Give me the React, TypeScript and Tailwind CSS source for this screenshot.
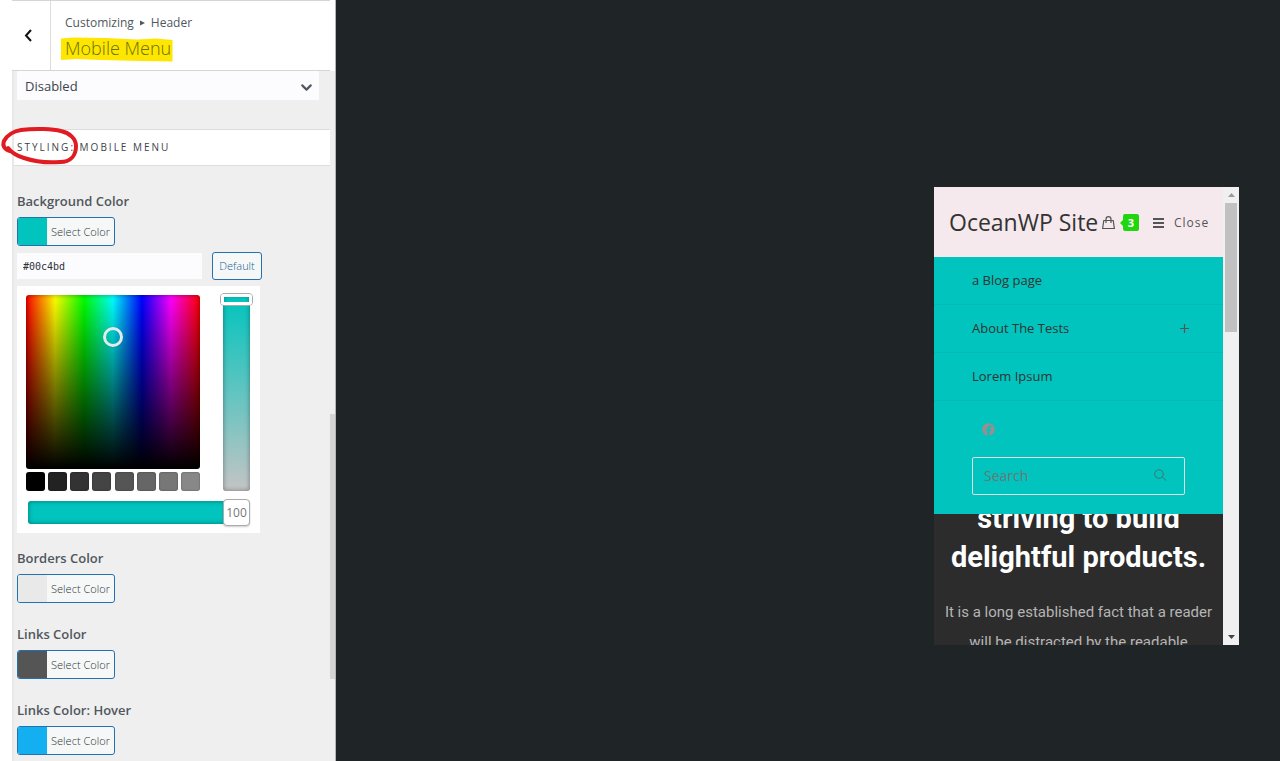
import { useState } from "react";
import { ChevronDown } from "lucide-react";
import { FaFacebook } from "react-icons/fa";

const swatches = ["#000000", "#222222", "#333333", "#444444", "#555555", "#666666", "#777777", "#888888"];

const colorControls = [
  { id: "borders", label: "Borders Color", color: "#e9e9e9" },
  { id: "links", label: "Links Color", color: "#555555" },
  { id: "links-hover", label: "Links Color: Hover", color: "#13aff0" },
];

const menuItems = [
  { label: "a Blog page", hasChildren: false },
  { label: "About The Tests", hasChildren: true },
  { label: "Lorem Ipsum", hasChildren: false },
];

function ColorButton({ id, label, color }: { id: string; label: string; color: string }) {
  return (
    <div className="flex flex-col items-start gap-1.5">
      <span id={id} className="h-5 text-[13px] leading-5 font-semibold text-[#50575e]">
        {label}
      </span>
      <button
        type="button"
        aria-describedby={id}
        className="flex h-[29px] w-[98px] overflow-hidden rounded-[3px] border border-[#2271b1] bg-[#f6f7f7] text-[11px] font-light text-[#2c3338]"
      >
        <span className="h-full w-[29px] shrink-0" style={{ backgroundColor: color }} />
        <span className="flex-1 text-center leading-[27px] whitespace-nowrap">Select Color</span>
      </button>
    </div>
  );
}

function ColorPicker() {
  return (
    <div className="w-[243px] bg-white p-[9px]">
      <div className="flex justify-between pr-px">
        <div className="w-[174px]">
          {/* Hue / lightness square */}
          <div className="relative h-[174px] rounded-[3px] bg-[linear-gradient(to_bottom,transparent,#000),linear-gradient(to_right,#f00,#ff0,#0f0,#0ff,#00f,#f0f,#f00)] shadow-[inset_0_0_5px_rgba(0,0,0,0.4)]">
            <span className="absolute top-8 left-[77px] h-5 w-5 rounded-full border-3 border-[#dcecef] shadow-[0_0_1px_#666]" />
          </div>
          <div className="mt-[3px] flex justify-between">
            {swatches.map((color) => (
              <button
                key={color}
                type="button"
                aria-label={color}
                className="h-[19px] w-[19px] rounded-[3px] shadow-[inset_0_0_2px_rgba(0,0,0,0.4)]"
                style={{ backgroundColor: color }}
              />
            ))}
          </div>
        </div>
        {/* Saturation strip */}
        <div className="relative h-[196px] w-[27px] rounded-[3px] bg-[linear-gradient(to_bottom,#00c4bd,#c4c4c4)] shadow-[inset_0_0_5px_rgba(0,0,0,0.4)]">
          <span className="absolute top-[-2px] left-[-3px] h-[13px] w-[33px] rounded-[4px] border border-[#aaa]">
            <span className="block h-full rounded-[3px] border-3 border-white" />
          </span>
          <input
            type="range"
            aria-label="Saturation"
            defaultValue={100}
            className="absolute inset-0 h-full w-full opacity-0 [writing-mode:vertical-lr] [direction:rtl]"
          />
        </div>
      </div>
      {/* Opacity */}
      <div className="relative mt-2.5 mr-px ml-0.5 h-[23px] rounded-[3px] bg-[#00c4bd] shadow-[inset_0_0_5px_rgba(0,0,0,0.4)]">
        <span className="absolute top-[-2px] right-0 h-[27px] w-[27px] rounded-[4px] border border-[#aaa] bg-white text-center text-xs leading-[25px] text-[#777] shadow-[0_1px_2px_rgba(0,0,0,0.2)]">
          100
        </span>
        <input
          type="range"
          aria-label="Opacity"
          defaultValue={100}
          className="absolute inset-0 h-full w-full opacity-0"
        />
      </div>
    </div>
  );
}

function Customizer() {
  const [hex, setHex] = useState("#00c4bd");

  return (
    <aside className="relative flex w-[336px] shrink-0 flex-col overflow-hidden border-r border-[#b5b5b5] bg-white pl-3 font-['Open_Sans','Noto_Sans',sans-serif]">
      <header className="mr-[5px] flex h-[71px] shrink-0 border-t border-b border-[#d5d5d5]">
        <button
          type="button"
          aria-label="Back"
          className="flex w-[39px] shrink-0 items-center border-r border-[#ddd] pl-3"
        >
          <svg width="8" height="13" viewBox="0 0 8 13" fill="none" stroke="#111" strokeWidth="2">
            <path d="M7 1 2 6.5 7 12" />
          </svg>
        </button>
        <div className="pt-3 pl-3.5">
          <p className="flex items-center text-xs leading-5 text-[#50575e]">
            Customizing
            <svg className="mx-1.5" width="5" height="6" viewBox="0 0 5 6" fill="#50575e">
              <path d="M0 0.5 5 3 0 5.5z" />
            </svg>
            Header
          </p>
          <div className="relative">
            {/* Marker stroke */}
            <svg
              className="absolute top-1 -left-1"
              width="112"
              height="26"
              viewBox="0 0 112 26"
              fill="#ffe600"
            >
              <path d="M0 1.5 12 0.5 45 1 76 2.5 95 1.5 111.5 3V24.5L80 24 40 23 15 22 0 23z" />
            </svg>
            <h1 className="relative text-lg leading-[30px] font-light whitespace-nowrap text-[#667300]">
              Mobile Menu
            </h1>
          </div>
        </div>
      </header>

      <div className="flex-1 border-l-2 border-[#e8e8e8] bg-[#efefef]">
        <div className="relative mr-4 ml-[3px]">
          <select
            aria-label="Custom menu"
            className="block h-[29px] w-full appearance-none bg-[#fcfcff] px-2 pt-0.5 text-[13px] text-[#3c434a]"
          >
            <option>Disabled</option>
          </select>
          <ChevronDown
            className="pointer-events-none absolute top-2 right-1 text-[#50575e]"
            size={17}
            strokeWidth={3}
          />
        </div>

        <div className="relative mt-[29px] mr-[5px] border-y border-[#ddd] bg-white pl-[3px]">
          <h2 className="text-[10px] leading-[35px] tracking-[2px] text-[#3c434a] uppercase">
            Styling: Mobile Menu
          </h2>
          {/* Hand-drawn ring */}
          <svg
            className="absolute -top-1 -left-3.5"
            width="80"
            height="40"
            viewBox="0 0 80 40"
            fill="none"
            stroke="#e11b22"
            strokeWidth="4"
            strokeLinecap="round"
            strokeLinejoin="round"
          >
            <path d="M10 25C5 24 2 20 4 15 7 9 14 5 21 4 36 2 53 3 61 5 70 7 76 13 76 20 76 29 71 36 60 36 47 37 33 35 24 32 17 30 12 27 8 22" />
          </svg>
        </div>

        <div className="mt-[25px] flex flex-col gap-1.5 pl-[3px]">
          <ColorButton id="background" label="Background Color" color="#00c4bd" />
          <div className="flex h-7 items-center gap-2.5">
            <input
              type="text"
              aria-label="Background color value"
              value={hex}
              onChange={(e) => setHex(e.target.value)}
              className="h-[26px] w-[185px] bg-[#fcfcff] px-1.5 font-['DejaVu_Sans_Mono',monospace] text-[10px] text-[#2c3338]"
            />
            <button
              type="button"
              onClick={() => setHex("#00c4bd")}
              className="h-7 w-[50px] rounded-[3px] border border-[#2271b1] bg-[#f6f7f7] text-[11px] font-light text-[#135e96]"
            >
              Default
            </button>
          </div>
          <ColorPicker />
        </div>

        <div className="mt-[15px] flex flex-col gap-[21px] pl-[3px]">
          {colorControls.map((control) => (
            <ColorButton key={control.id} {...control} />
          ))}
        </div>
      </div>

      {/* Scrollbar thumb */}
      <span className="absolute top-[414px] right-0 h-[265px] w-[5px] bg-[#d5d5d5]" />
    </aside>
  );
}

function MobilePreview() {
  return (
    <div className="flex h-[458px] w-[305px] bg-[#2c2c2c]">
      <div className="flex min-w-0 flex-1 flex-col overflow-hidden font-['Open_Sans',sans-serif]">
        <header className="flex h-[70px] shrink-0 items-center bg-[#f5e9ed] pt-px pl-[15px]">
          <a href="#" className="w-[153px] shrink-0 text-[23px] whitespace-nowrap text-[#333]">
            OceanWP Site
          </a>
          <a href="#" aria-label="Cart, 3 items" className="flex shrink-0 items-center">
            <svg width="13" height="14" viewBox="0 0 13 14" fill="none" stroke="#555" strokeWidth="1.2">
              <path d="M1.8 4.5h9.4l1.2 8H0.6z" />
              <path d="M4 7V3.2a2.5 2.5 0 0 1 5 0V7" />
            </svg>
            <svg className="ml-[5px]" width="3" height="6" viewBox="0 0 3 6" fill="#21d60f">
              <path d="M3 0v6L0 3z" />
            </svg>
            <span className="h-[17px] w-4 rounded-[2px] bg-[#21d60f] text-center text-[11px] leading-[17px] font-bold text-white">
              3
            </span>
          </a>
          <button type="button" className="ml-3.5 flex items-center gap-2.5 text-xs text-[#555]">
            <svg width="11" height="10" viewBox="0 0 11 10" fill="#555" shapeRendering="crispEdges">
              <path d="M0 0h11v2H0zM0 4h11v2H0zM0 8h11v2H0z" />
            </svg>
            <span className="tracking-[1px]">Close</span>
          </button>
        </header>

        <div className="shrink-0 bg-[#00c4bd] pb-[19px]">
          <nav>
            {menuItems.map((item) => (
              <a
                key={item.label}
                href="#"
                className="flex h-12 items-center justify-between border-b border-[#04bab4] pr-[33px] pl-[38px] text-[13px] text-[#333]"
              >
                {item.label}
                {item.hasChildren && (
                  <svg width="10" height="9" viewBox="0 0 10 9" stroke="#555" strokeWidth="1.2">
                    <path d="M4.5 0v9M0 4.5h9" />
                  </svg>
                )}
              </a>
            ))}
          </nav>
          <a href="#" aria-label="Facebook" className="mt-[22px] ml-12 block w-[13px]">
            <FaFacebook size={13} color="#978f92" />
          </a>
          <form className="relative mx-[38px] mt-[21px]">
            <input
              type="search"
              aria-label="Search"
              placeholder="Search"
              className="block h-[38px] w-full rounded-[2px] border border-[#dde5e5] bg-transparent px-[11px] pb-0.5 text-sm text-[#333] placeholder:text-[#6b7777]"
            />
            <button type="button" aria-label="Submit search" className="absolute top-3 right-[18px]">
              <svg width="13" height="12" viewBox="0 0 13 12" fill="none" stroke="#3f7775" strokeWidth="1">
                <circle cx="5" cy="5" r="4.3" />
                <path d="M8.2 8 12.2 11.5" />
              </svg>
            </button>
          </form>
        </div>

        <div className="min-h-0 flex-1 overflow-hidden text-center font-['Roboto',sans-serif]">
          <h2 className="-mt-[15px] text-[29px] leading-[39px] font-bold text-white">
            striving to build
            <br />
            delightful products.
          </h2>
          <p className="mt-5 text-[15px] leading-[30px] whitespace-nowrap text-[#b5b5b5]">
            It is a long established fact that a reader
            <br />
            will be distracted by the readable
          </p>
        </div>
      </div>

      {/* Scrollbar */}
      <div className="flex w-4 shrink-0 flex-col items-center bg-[#f0f0f0]">
        <svg className="mt-1.5 mb-1.5" width="7" height="4" viewBox="0 0 7 4" fill="#999">
          <path d="M3.5 0 7 4H0z" />
        </svg>
        <span className="h-[129px] w-3 bg-[#c1c1c1]" />
        <svg className="mt-auto mb-1.5" width="7" height="4" viewBox="0 0 7 4" fill="#444">
          <path d="M0 0h7L3.5 4z" />
        </svg>
      </div>
    </div>
  );
}

export default function App() {
  return (
    <div className="flex h-screen overflow-hidden bg-[#1f2427]">
      <Customizer />
      <main className="flex flex-1 items-start justify-end pt-[187px] pr-[41px]">
        <MobilePreview />
      </main>
    </div>
  );
}
